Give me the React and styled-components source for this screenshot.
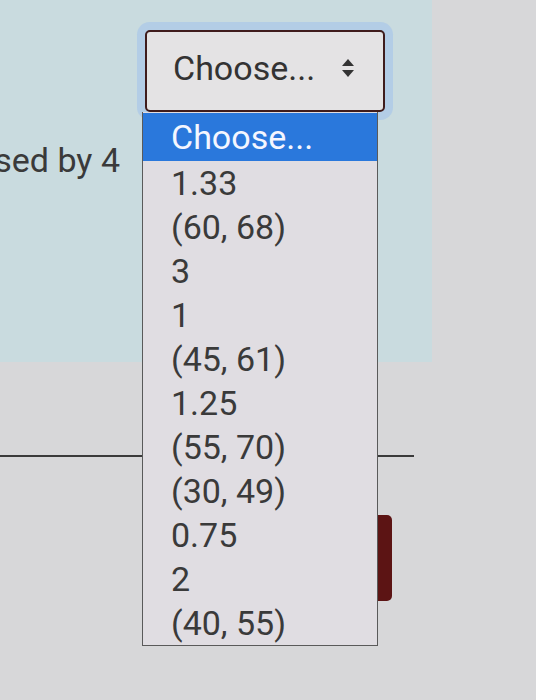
import styled, { createGlobalStyle } from "styled-components";

const GlobalStyle = createGlobalStyle`
  html, body {
    margin: 0;
    padding: 0;
    background: #d6d5d8;
  }
  body {
    font-family: Roboto, "Liberation Sans", sans-serif;
    color: #3b3b3b;
    overflow: hidden;
  }
`;

const options = [
  "Choose...",
  "1.33",
  "(60, 68)",
  "3",
  "1",
  "(45, 61)",
  "1.25",
  "(55, 70)",
  "(30, 49)",
  "0.75",
  "2",
  "(40, 55)",
];

const Page = styled.div`
  width: 536px;
  height: 700px;
  background: #d7d7d9;
`;

const Formulation = styled.div`
  width: 432px;
  height: 362px;
  box-sizing: border-box;
  padding-top: 30px;
  background: #c9dbdf;
  display: flex;
  flex-direction: column;
`;

const SelectWrap = styled.div`
  position: relative;
  margin-left: 145px;
  width: 240px;
`;

const SelectBox = styled.div`
  box-sizing: border-box;
  height: 82px;
  border: 2px solid #3f1c1c;
  border-radius: 5px;
  background: #e4e3e4;
  box-shadow: 0 0 0 8px rgba(170, 200, 232, 0.7);
  display: flex;
  align-items: center;
  padding: 0 0 6px 26px;
  gap: 26px;
  font-size: 34px;
  color: #333;
`;

const Listbox = styled.ul`
  position: absolute;
  top: 82px;
  left: -3px;
  width: 236px;
  box-sizing: border-box;
  margin: 0;
  padding: 1px 0 0;
  list-style: none;
  background: #e0dde2;
  border: 1px solid #5a5a5a;
  border-top: none;
  z-index: 5;
`;

const Option = styled.li`
  height: ${(p) => (p.$active ? "48px" : "44px")};
  line-height: ${(p) => (p.$active ? "48px" : "44px")};
  padding-left: 28px;
  font-size: 34px;
  color: ${(p) => (p.$active ? "#f4f6ff" : "#3a3a3a")};
  background: ${(p) => (p.$active ? "#2a78dc" : "transparent")};
`;

const QuestionLine = styled.div`
  margin-top: 28px;
  width: 120px;
  overflow: hidden;
  white-space: nowrap;
  display: flex;
  justify-content: flex-end;
  font-size: 34px;
  color: #3a3a3a;
`;

const Separator = styled.hr`
  margin: 93px 0 0;
  width: 414px;
  border: none;
  border-top: 2px solid #3a3a3a;
`;

const ButtonRow = styled.div`
  width: 392px;
  margin-top: 58px;
  display: flex;
  justify-content: flex-end;
`;

const CheckButton = styled.button`
  width: 100px;
  height: 86px;
  border: none;
  border-radius: 5px;
  background: #5c1414;
  color: #fff;
  font-family: Roboto, "Liberation Sans", sans-serif;
  font-size: 20px;
`;

const UpDown = () => (
  <svg width="14" height="22" viewBox="0 0 14 22">
    <path d="M1 9 L7 2 L13 9 Z" fill="#333" />
    <path d="M1 13 L7 20 L13 13 Z" fill="#333" />
  </svg>
);

export default function App() {
  return (
    <Page>
      <GlobalStyle />
      <Formulation>
        <SelectWrap>
          <SelectBox>
            <span>Choose...</span>
            <UpDown />
          </SelectBox>
          <Listbox>
            {options.map((o, i) => (
              <Option key={i} $active={i === 0}>
                {o}
              </Option>
            ))}
          </Listbox>
        </SelectWrap>
        <QuestionLine>
          <span>increased by 4</span>
        </QuestionLine>
      </Formulation>
      <Separator />
      <ButtonRow>
        <CheckButton>Check</CheckButton>
      </ButtonRow>
    </Page>
  );
}
